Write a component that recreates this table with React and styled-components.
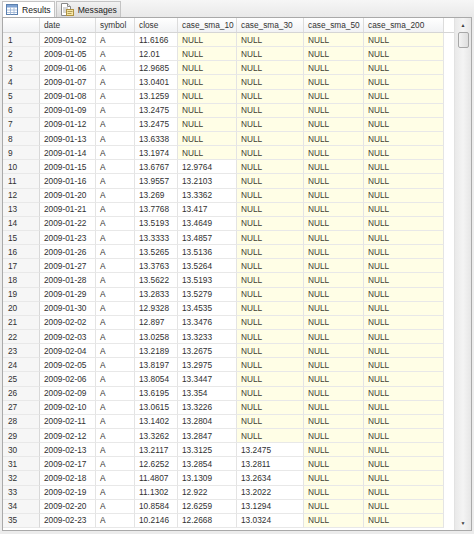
import React from "react";
import styled, { createGlobalStyle } from "styled-components";

const GlobalStyle = createGlobalStyle`
  html, body {
    margin: 0;
    padding: 0;
    background: #ececec;
  }
  body {
    font-family: "Liberation Sans", Arial, sans-serif;
    font-size: 8.3px;
    color: #333333;
  }
`;

// [date, close, sma10, sma30]  -- sma50 / sma200 are always NULL here
const rows = [
  ["2009-01-02", "11.6166", null, null],
  ["2009-01-05", "12.01", null, null],
  ["2009-01-06", "12.9685", null, null],
  ["2009-01-07", "13.0401", null, null],
  ["2009-01-08", "13.1259", null, null],
  ["2009-01-09", "13.2475", null, null],
  ["2009-01-12", "13.2475", null, null],
  ["2009-01-13", "13.6338", null, null],
  ["2009-01-14", "13.1974", null, null],
  ["2009-01-15", "13.6767", "12.9764", null],
  ["2009-01-16", "13.9557", "13.2103", null],
  ["2009-01-20", "13.269", "13.3362", null],
  ["2009-01-21", "13.7768", "13.417", null],
  ["2009-01-22", "13.5193", "13.4649", null],
  ["2009-01-23", "13.3333", "13.4857", null],
  ["2009-01-26", "13.5265", "13.5136", null],
  ["2009-01-27", "13.3763", "13.5264", null],
  ["2009-01-28", "13.5622", "13.5193", null],
  ["2009-01-29", "13.2833", "13.5279", null],
  ["2009-01-30", "12.9328", "13.4535", null],
  ["2009-02-02", "12.897", "13.3476", null],
  ["2009-02-03", "13.0258", "13.3233", null],
  ["2009-02-04", "13.2189", "13.2675", null],
  ["2009-02-05", "13.8197", "13.2975", null],
  ["2009-02-06", "13.8054", "13.3447", null],
  ["2009-02-09", "13.6195", "13.354", null],
  ["2009-02-10", "13.0615", "13.3226", null],
  ["2009-02-11", "13.1402", "13.2804", null],
  ["2009-02-12", "13.3262", "13.2847", null],
  ["2009-02-13", "13.2117", "13.3125", "13.2475"],
  ["2009-02-17", "12.6252", "13.2854", "13.2811"],
  ["2009-02-18", "11.4807", "13.1309", "13.2634"],
  ["2009-02-19", "11.1302", "12.922", "13.2022"],
  ["2009-02-20", "10.8584", "12.6259", "13.1294"],
  ["2009-02-23", "10.2146", "12.2668", "13.0324"],
];

const columns = ["date", "symbol", "close", "case_sma_10", "case_sma_30", "case_sma_50", "case_sma_200"];

const COLS = "37px 56px 39px 43px 59px 67px 60px 80px 1fr";

const Cell = ({ value }) =>
  value === null ? <DataCell $null>NULL</DataCell> : <DataCell>{value}</DataCell>;

const ResultsIcon = () => (
  <svg width="12" height="11" viewBox="0 0 12 11">
    <rect x="0.5" y="0.5" width="11" height="10" fill="#fff" stroke="#5a7fae" />
    <rect x="1" y="1" width="10" height="2.5" fill="#7ea2d2" />
    <path d="M1 6h10M1 8.5h10M4.5 3.5v7M8 3.5v7" stroke="#9ab3d4" strokeWidth="0.8" />
  </svg>
);

const MessagesIcon = () => (
  <svg width="14" height="13" viewBox="0 0 14 13">
    <path d="M1.5 0.5h6l3 3v9h-9z" fill="#fff" stroke="#8a8a8a" />
    <path d="M7.5 0.5v3h3" fill="#eee" stroke="#8a8a8a" />
    <path d="M3 5h5M3 7h5M3 9h5" stroke="#9a9a9a" strokeWidth="0.8" />
    <rect x="6.5" y="6.5" width="7" height="6" fill="#f6e7a8" stroke="#b09240" />
    <path d="M7.5 8.5h5M7.5 10.5h4" stroke="#8f7a30" strokeWidth="0.7" />
  </svg>
);

const App = () => {
  return (
    <>
      <GlobalStyle />
      <Page>
        <TabBar>
          <Tab $active>
            <ResultsIcon />
            Results
          </Tab>
          <Tab>
            <MessagesIcon />
            Messages
          </Tab>
        </TabBar>

        <GridFrame>
          <Table>
            <HeaderRow>
              <HeaderCell />
              {columns.map((c) => (
                <HeaderCell key={c}>{c}</HeaderCell>
              ))}
              <Filler />
            </HeaderRow>
            {rows.map((r, i) => (
              <Row key={r[0]}>
                <RowNum>{i + 1}</RowNum>
                <DataCell>{r[0]}</DataCell>
                <DataCell>A</DataCell>
                <DataCell>{r[1]}</DataCell>
                <Cell value={r[2]} />
                <Cell value={r[3]} />
                <Cell value={null} />
                <Cell value={null} />
                <Filler />
              </Row>
            ))}
          </Table>

          <ScrollBar>
            <Arrow>▲</Arrow>
            <Thumb />
            <Track />
            <Arrow>▼</Arrow>
          </ScrollBar>
        </GridFrame>
      </Page>
    </>
  );
};

export default App;

const Page = styled.div`
  width: 474px;
  height: 534px;
  overflow: hidden;
  background: #ececec;
`;

const TabBar = styled.div`
  height: 17px;
  display: flex;
  align-items: flex-end;
  gap: 1px;
  padding-left: 2px;
  background: linear-gradient(#f6f6f6, #e9e9e9);
`;

const Tab = styled.div`
  height: 16px;
  box-sizing: border-box;
  display: flex;
  align-items: center;
  gap: 4px;
  padding: 0 3px 0 3px;
  border: 1px solid #c4c4c4;
  border-bottom: none;
  background: ${(p) => (p.$active ? "#ffffff" : "linear-gradient(#f2f2f2, #dcdcdc)")};
  color: #222222;
  font-size: 8.6px;
`;

const GridFrame = styled.div`
  margin-left: 2px;
  width: 470px;
  height: 514px;
  box-sizing: border-box;
  border: 1px solid #a9a9a9;
  background: #ffffff;
  display: flex;
  overflow: hidden;
`;

const Table = styled.div`
  flex: 1;
  display: flex;
  flex-direction: column;
`;

const HeaderRow = styled.div`
  display: grid;
  grid-template-columns: ${COLS};
  height: 15px;
  background: linear-gradient(#ffffff, #f1f2f4);
  border-bottom: 1px solid #d5d5d5;
  box-sizing: border-box;
`;

const HeaderCell = styled.div`
  display: flex;
  align-items: center;
  padding-left: 4px;
  border-right: 1px solid #dcdcdc;
  color: #333333;
  white-space: nowrap;
  overflow: hidden;
`;

const Row = styled.div`
  display: grid;
  grid-template-columns: ${COLS};
  height: 14.15px;
  flex: none;
`;

const DataCell = styled.div`
  display: flex;
  align-items: center;
  padding-left: 4px;
  background: ${(p) => (p.$null ? "#fffee6" : "#ffffff")};
  color: ${(p) => (p.$null ? "#3d3d30" : "#303030")};
  border-right: 1px solid #e4e4e4;
  border-bottom: 1px solid #e8e8e8;
  white-space: nowrap;
  overflow: hidden;
`;

const RowNum = styled(DataCell)`
  background: #f6f6f6;
  border-right: 1px solid #d8d8d8;
  padding-left: 5px;
`;

const Filler = styled.div`
  background: #ffffff;
`;

const ScrollBar = styled.div`
  width: 17px;
  flex: none;
  display: flex;
  flex-direction: column;
  align-items: center;
  background: linear-gradient(90deg, #e9e9e9, #f4f4f4 50%, #e6e6e6);
  border-left: 1px solid #e2e2e2;
  box-sizing: border-box;
`;

const Arrow = styled.div`
  height: 14px;
  display: flex;
  align-items: center;
  justify-content: center;
  font-size: 5px;
  color: #3c3c3c;
`;

const Thumb = styled.div`
  width: 11px;
  height: 16px;
  box-sizing: border-box;
  border: 1px solid #a7a7a7;
  border-radius: 2px;
  background: linear-gradient(90deg, #f3f3f3, #dedede);
`;

const Track = styled.div`
  flex: 1;
`;
